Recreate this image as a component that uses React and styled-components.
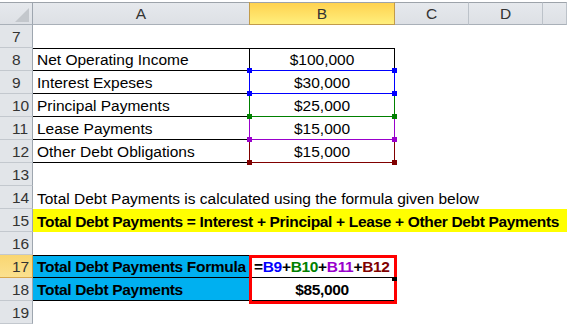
import React from 'react';
import styled, { createGlobalStyle } from 'styled-components';

const GlobalStyle = createGlobalStyle`
  html, body { margin: 0; padding: 0; background: #fff; }
  body { font-family: "Liberation Sans", Arial, sans-serif; }
`;

const Sheet = styled.div`
  display: grid;
  grid-template-columns: 33px 217px 145px 74px 74px 1fr;
  grid-template-rows: 25px repeat(13, 23px);
  width: 567px;
  height: 324px;
  overflow: hidden;
  font-size: 15.5px;
  color: #000;
  background: #fff;
`;

const Corner = styled.div`
  margin-top: 2px;
  border-top: 1px solid #9da3aa;
  border-right: 1px solid #9ea6af;
  border-bottom: 1px solid #a9b0b8;
  background: linear-gradient(#e6e9ed, #dde0e5);
  display: flex;
  justify-content: flex-end;
  align-items: flex-end;
  padding: 0 3px 2px 0;
  &::after {
    content: '';
    width: 14px;
    height: 14px;
    background: #c3c7cc;
    clip-path: polygon(100% 0, 100% 100%, 0 100%);
  }
`;

const ColHead = styled.div`
  margin-top: 2px;
  border-top: 1px solid #9da3aa;
  border-bottom: 1px solid ${p => (p.$active ? '#c29b4a' : '#a9b0b8')};
  border-right: 1px solid ${p => (p.$active ? '#c29b4a' : '#bcc2c9')};
  box-shadow: ${p => (p.$active ? '-1px 0 0 #c29b4a' : 'none')};
  background: ${p =>
    p.$active ? 'linear-gradient(#ffd24f, #ffef7d)' : 'linear-gradient(#e6e9ed, #dde0e5)'};
  display: flex;
  align-items: center;
  justify-content: center;
  color: #333;
`;

const RowHead = styled.div`
  background: ${p => (p.$active ? 'linear-gradient(#f9d671, #fbe18f)' : '#e2e5e9')};
  border-right: 1px solid ${p => (p.$active ? '#d19c45' : '#9ea6af')};
  border-bottom: 1px solid ${p => (p.$active ? '#d8a74c' : '#c3c8ce')};
  display: flex;
  align-items: flex-end;
  padding: 0 0 1px 12px;
  color: #333;
`;

const Cell = styled.div`
  position: relative;
  display: flex;
  align-items: flex-end;
  justify-content: ${p => (p.$center ? 'center' : 'flex-start')};
  padding: 0 4px 1px 4px;
  white-space: nowrap;
  font-weight: ${p => (p.$bold ? 700 : 400)};
  letter-spacing: ${p => (p.$bold ? '-0.33px' : 'normal')};
  background: ${p => p.$bg || 'transparent'};
  border-top: ${p => (p.$top ? '1px solid #000' : 'none')};
  border-bottom: ${p => (p.$boxed ? '1px solid #000' : 'none')};
  border-right: ${p => (p.$boxed ? '1px solid #000' : 'none')};
`;

const WideCell = styled(Cell)`
  grid-column: 2 / -1;
`;

const Range = styled.div`
  position: absolute;
  inset: -1px -1px -1px -1px;
  border: 1px solid ${p => p.$color};
  z-index: ${p => p.$z};
  pointer-events: none;
`;

const Handle = styled.span`
  position: absolute;
  width: 5px;
  height: 5px;
  background: ${p => p.$color};
  ${p => (p.$y === 'top' ? 'top: -3px;' : 'bottom: -3px;')}
  ${p => (p.$x === 'left' ? 'left: -3px;' : 'right: -3px;')}
`;

const Selection = styled.div`
  position: absolute;
  left: -1px;
  top: -1px;
  right: -3px;
  height: 49px;
  border: 3px solid #ff0000;
  box-sizing: border-box;
  z-index: 5;
  pointer-events: none;
`;

const FillHandle = styled.span`
  position: absolute;
  right: -3px;
  bottom: -4px;
  width: 5px;
  height: 4px;
  background: #000;
  z-index: 6;
`;

const Ref = styled.span`
  color: ${p => p.$color};
`;

const Caret = styled.span`
  display: inline-block;
  width: 1px;
  height: 17px;
  margin-left: 3px;
  background: #000;
  vertical-align: -3px;
`;

const ranges = {
  9: { color: '#0000ff', z: 4 },
  10: { color: '#008000', z: 3 },
  11: { color: '#9900cc', z: 2 },
  12: { color: '#800000', z: 1 },
};

const table = [
  [8, 'Net Operating Income', '$100,000'],
  [9, 'Interest Expeses', '$30,000'],
  [10, 'Principal Payments', '$25,000'],
  [11, 'Lease Payments', '$15,000'],
  [12, 'Other Debt Obligations', '$15,000'],
];

function RangeBox({ color, z }) {
  return (
    <Range $color={color} $z={z}>
      <Handle $color={color} $y="top" $x="left" />
      <Handle $color={color} $y="top" $x="right" />
      <Handle $color={color} $y="bottom" $x="left" />
      <Handle $color={color} $y="bottom" $x="right" />
    </Range>
  );
}

function Blank() {
  return (
    <>
      <Cell />
      <Cell />
      <Cell />
      <Cell />
    </>
  );
}

export default function App() {
  return (
    <>
      <GlobalStyle />
      <Sheet>
        <Corner />
        <ColHead>A</ColHead>
        <ColHead $active>B</ColHead>
        <ColHead>C</ColHead>
        <ColHead>D</ColHead>
        <ColHead />

        <RowHead>7</RowHead>
        <Cell />
        <Blank />

        {table.map(([n, label, value]) => (
          <React.Fragment key={n}>
            <RowHead>{n}</RowHead>
            <Cell $boxed $top={n === 8}>{label}</Cell>
            <Cell $boxed $center $top={n === 8}>
              {value}
              {ranges[n] && <RangeBox color={ranges[n].color} z={ranges[n].z} />}
            </Cell>
            <Cell />
            <Cell />
            <Cell />
          </React.Fragment>
        ))}

        <RowHead>13</RowHead>
        <Cell />
        <Blank />

        <RowHead>14</RowHead>
        <WideCell>Total Debt Payments is calculated using the formula given below</WideCell>

        <RowHead>15</RowHead>
        <WideCell $bold $bg="#ffff00">
          Total Debt Payments = Interest + Principal + Lease + Other Debt Payments
        </WideCell>

        <RowHead>16</RowHead>
        <Cell />
        <Blank />

        <RowHead $active>17</RowHead>
        <Cell $boxed $top $bold $bg="#00b0f0">Total Debt Payments Formula</Cell>
        <Cell $boxed $top $bold>
          =<Ref $color="#0000ff">B9</Ref>+<Ref $color="#008000">B10</Ref>+
          <Ref $color="#9900cc">B11</Ref>+<Ref $color="#800000">B12</Ref>
          <Caret />
          <Selection />
          <FillHandle />
        </Cell>
        <Cell />
        <Cell />
        <Cell />

        <RowHead>18</RowHead>
        <Cell $boxed $bold $bg="#00b0f0">Total Debt Payments</Cell>
        <Cell $boxed $bold $center>$85,000</Cell>
        <Cell />
        <Cell />
        <Cell />

        <RowHead>19</RowHead>
        <Cell />
        <Blank />
      </Sheet>
    </>
  );
}
